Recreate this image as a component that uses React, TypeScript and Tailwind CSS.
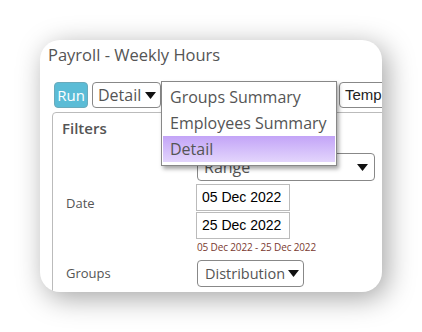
import React from "react";

const Arrow = () => (
  <svg width="11" height="7" viewBox="0 0 11 7" className="shrink-0">
    <path d="M0 0 L11 0 L5.5 7 Z" fill="#111" />
  </svg>
);

export default function App() {
  const os = { fontFamily: '"Open Sans", "Noto Sans", sans-serif' } as React.CSSProperties;
  const ar = { fontFamily: '"Liberation Sans", Arial, sans-serif' } as React.CSSProperties;
  return (
    <div className="w-[422px] h-[332px] bg-white pt-[40px] pl-[40px]" style={os}>
      <div className="relative w-[342px] h-[252px] bg-white rounded-[20px] overflow-hidden shadow-[5px_6px_28px_rgba(0,0,0,0.36)]">
        <div className="pl-[8px] pt-[3px] h-[42px] text-[16.5px] font-medium text-[#555] leading-[24px]">
          Payroll - Weekly Hours
        </div>
        <div className="flex items-center pl-[14px] h-[26px]">
          <button className="shrink-0 w-[34px] h-[26px] bg-[#5bbcd6] text-white text-[15px] rounded-[4px] border border-[#6aaabb] leading-none">
            Run
          </button>
          <div className="shrink-0 ml-[4px] w-[69px] h-[26px] border border-[#888] rounded-[4px] flex items-center pl-[5px] pr-[4px] justify-between text-[16px] text-[#555]">
            <span>Detail</span>
            <Arrow />
          </div>
          <div className="shrink-0 ml-[178px] w-[60px] h-[26px] border border-[#888] rounded-[4px] flex items-center pl-[5px] text-[15px] text-[#222]" style={ar}>
            Temp
          </div>
        </div>
        <div className="ml-[12px] mt-[4px] w-[360px] h-[200px] border border-[#bbb] rounded-tl-[4px]">
          <div className="pl-[9px] pt-[4px] text-[15px] font-semibold text-[#555] leading-[22px]">Filters</div>
          <div className="grid grid-cols-[131px_1fr] pl-[13px] mt-[14px] text-[13px] text-[#555]">
            <div className="flex items-center h-[100px] pt-[2px]">Date</div>
            <div className="flex flex-col">
              <div className="w-[178px] h-[28px] border border-[#888] rounded-[4px] flex items-center justify-between pl-[6px] pr-[6px] text-[16px] text-[#555]">
                <span>Range</span>
                <Arrow />
              </div>
              <div className="mt-[3px] ml-[-1px] w-[94px] h-[27px] border border-[#bbb] flex items-center pl-[5px] text-[14px] text-black" style={ar}>
                05 Dec 2022
              </div>
              <div className="mt-[1px] ml-[-1px] w-[94px] h-[27px] border border-[#bbb] flex items-center pl-[5px] text-[14px] text-black" style={ar}>
                25 Dec 2022
              </div>
              <div className="mt-[2px] text-[10px] leading-[12px] text-[#7a3a30] tracking-[-0.15px]">05 Dec 2022 - 25 Dec 2022</div>
            </div>
            <div className="flex items-center h-[27px] mt-[7px]">Groups</div>
            <div className="mt-[7px]">
              <div className="w-[107px] h-[27px] border border-[#888] rounded-[4px] flex items-center justify-between pl-[7px] pr-[4px] text-[14.5px] text-[#555]">
                <span>Distribution</span>
                <Arrow />
              </div>
            </div>
          </div>
        </div>
        <div className="absolute left-[121px] top-[41px] w-[176px] h-[85px] bg-white border border-[#888] shadow-[2px_3px_4px_rgba(0,0,0,0.35)] pt-[2px] px-[1px] text-[16px] text-[#555]">
          <div className="h-[26px] flex items-center pl-[7px]">Groups Summary</div>
          <div className="h-[26px] flex items-center pl-[7px]">Employees Summary</div>
          <div className="h-[26px] flex items-center pl-[7px] bg-gradient-to-b from-[#c3a4f7] to-[#e3d5fc]">Detail</div>
        </div>
      </div>
    </div>
  );
}
